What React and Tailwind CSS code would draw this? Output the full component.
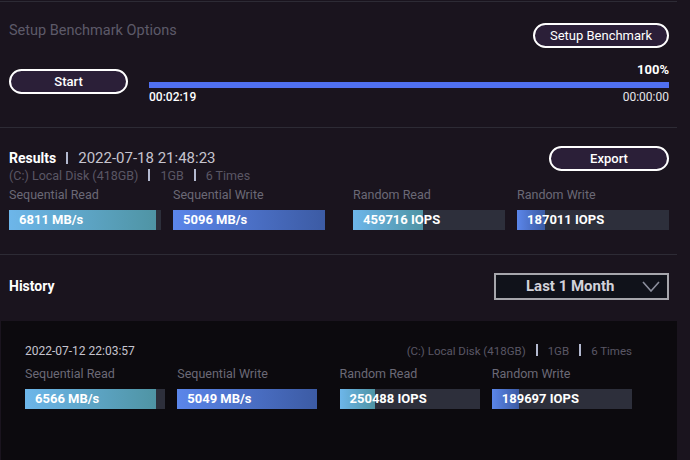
const font = { fontFamily: "Roboto, 'Noto Sans', sans-serif" };

const Bar = ({ value, pct, kind, width }) => {
  const fill =
    kind === "read"
      ? "bg-gradient-to-r from-[#6db6ea] to-[#4f94a4]"
      : "bg-gradient-to-r from-[#5b86ea] to-[#3c5ba4]";
  return (
    <div className={`relative h-5 bg-[#2d2f3b] ${width}`}>
      <div className={`absolute inset-y-0 left-0 ${fill}`} style={{ width: `${pct}%` }} />
      <span className="relative block pl-[10px] text-[13px] leading-5 font-bold text-white">
        {value}
      </span>
    </div>
  );
};

const Metric = ({ label, value, pct, kind, width }) => (
  <div className="flex flex-col">
    <span className="text-[12.5px] leading-4 text-[#6b6976]">{label}</span>
    <div className="mt-[7px]">
      <Bar value={value} pct={pct} kind={kind} width={width} />
    </div>
  </div>
);

const Sep = () => <span className="mx-[10px] inline-block h-[12px] w-[2px] bg-[#b3b9cf] align-[-1px]" />;

const PillButton = ({ children, className }) => (
  <button
    className={`rounded-full border-2 border-white bg-[#2b1f38] text-[13px] leading-none text-white ${className}`}
  >
    {children}
  </button>
);

export default function App() {
  return (
    <div className="h-[460px] w-[690px] overflow-hidden bg-[#1a141e]" style={font}>
      <div className="w-[677px] pt-px">
        {/* setup */}
        <section className="h-[126px] border-t border-[#2d2b35] pl-[9px] pr-[8px] pt-[19px]">
          <div className="flex items-start justify-between">
            <h2 className="text-[14.5px] leading-5 text-[#5d5a69]">Setup Benchmark Options</h2>
            <PillButton className="mt-[2px] h-[25px] w-[136px]">Setup Benchmark</PillButton>
          </div>
          <div className="mt-[14px] flex items-start">
            <PillButton className="mt-[7px] h-[25px] w-[119px] font-medium">Start</PillButton>
            <div className="ml-[21px] flex-1">
              <div className="text-right text-[13px] leading-4 font-bold text-white">100%</div>
              <div className="mt-[4px] h-[6px] bg-[#5070f0]" />
              <div className="mt-px flex justify-between text-[12px] leading-4 text-white">
                <span className="font-medium">00:02:19</span>
                <span className="text-[#e6e6ea]">00:00:00</span>
              </div>
            </div>
          </div>
        </section>

        {/* results */}
        <section className="h-[127px] border-t border-[#2d2b35] pl-[9px] pr-[8px] pt-[18px]">
          <div className="flex items-start justify-between">
            <div className="mt-[3px] flex flex-col">
              <div className="flex items-center text-[15px] leading-[18px]">
                <span className="text-[14px] font-bold text-white">Results</span>
                <span className="mx-[10px] inline-block h-[12px] w-[2px] bg-[#b3b9cf]" />
                <span className="text-[#c6c4cf]">2022-07-18 21:48:23</span>
              </div>
              <div className="mt-[1px] text-[12.5px] leading-4 text-[#5a5765]">
                (C:) Local Disk (418GB)
                <Sep />
                1GB
                <Sep />6 Times
              </div>
            </div>
            <PillButton className="h-[25px] w-[120px] font-medium">Export</PillButton>
          </div>
          <div className="mt-[3px] grid grid-cols-2 gap-[28px]">
            <div className="grid grid-cols-2 gap-3">
              <Metric label="Sequential Read" value="6811 MB/s" pct={97} kind="read" width="w-[152px]" />
              <Metric label="Sequential Write" value="5096 MB/s" pct={100} kind="write" width="w-[152px]" />
            </div>
            <div className="grid grid-cols-2 gap-3">
              <Metric label="Random Read" value="459716 IOPS" pct={46} kind="read" width="w-[152px]" />
              <Metric label="Random Write" value="187011 IOPS" pct={18.5} kind="write" width="w-[152px]" />
            </div>
          </div>
        </section>

        {/* history */}
        <section className="border-t border-[#2d2b35] pt-[18px]">
          <div className="flex items-center justify-between pl-[9px] pr-[8px]">
            <h2 className="text-[14px] font-bold text-white">History</h2>
            <div className="flex h-[27px] w-[175px] items-center border-2 border-[#a6a6ac] bg-[#10121a] pl-[30px] pr-[7px]">
              <span className="flex-1 text-[15px] font-bold text-[#d2d2da]">Last 1 Month</span>
              <svg width="18" height="11" viewBox="0 0 18 11" fill="none">
                <path d="M1 1l8 9 8-9" stroke="#8b8e9c" strokeWidth="1.6" />
              </svg>
            </div>
          </div>
          <div className="ml-px mt-[21px] h-[200px] bg-[#0c0a0e] pl-[24px] pr-[45px] pt-[22px]">
            <div className="flex items-center justify-between">
              <span className="text-[12px] leading-4 text-[#c6c4cf]">2022-07-12 22:03:57</span>
              <span className="text-[11.5px] leading-4 text-[#5a5765]">
                (C:) Local Disk (418GB)
                <Sep />
                1GB
                <Sep />6 Times
              </span>
            </div>
            <div className="mt-[7px] grid grid-cols-2 gap-[22px]">
              <div className="grid grid-cols-2 gap-3">
                <Metric label="Sequential Read" value="6566 MB/s" pct={93.5} kind="read" width="w-[140px]" />
                <Metric label="Sequential Write" value="5049 MB/s" pct={100} kind="write" width="w-[140px]" />
              </div>
              <div className="grid grid-cols-2 gap-3">
                <Metric label="Random Read" value="250488 IOPS" pct={25} kind="read" width="w-[140px]" />
                <Metric label="Random Write" value="189697 IOPS" pct={19.5} kind="write" width="w-[140px]" />
              </div>
            </div>
          </div>
        </section>
      </div>
    </div>
  );
}
